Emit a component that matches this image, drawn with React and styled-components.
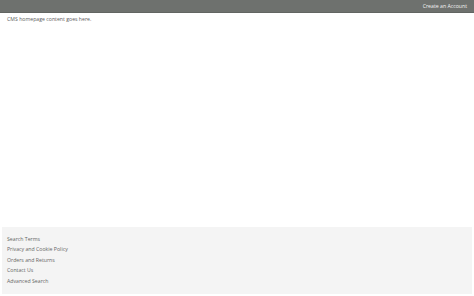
import React from 'react';
import styled, { createGlobalStyle } from 'styled-components';

const GlobalStyle = createGlobalStyle`
  html, body {
    margin: 0;
    padding: 0;
    background: #ffffff;
  }
  body {
    font-family: "Open Sans", "Liberation Sans", sans-serif;
    color: #555555;
  }
`;

const Page = styled.div`
  display: flex;
  flex-direction: column;
  width: 474px;
  height: 296px;
  overflow: hidden;
`;

const TopBar = styled.header`
  display: flex;
  justify-content: flex-end;
  align-items: center;
  height: 13px;
  box-sizing: border-box;
  background: #6e716e;
  border-bottom: 1px solid #626562;
  padding: 0 7px 0 0;
`;

const HeaderLink = styled.a`
  color: #f4f4f4;
  font-size: 5.2px;
  text-decoration: none;
`;

const Main = styled.main`
  flex: 1;
  padding: 2px 7px 0;
  font-size: 5.2px;
  color: #5a5a5a;
`;

const Footer = styled.footer`
  margin: 0 2px 2px;
  height: 67px;
  background: #f4f4f4;
  padding: 7px 5px 0;
  box-sizing: border-box;
`;

const LinkList = styled.ul`
  list-style: none;
  margin: 0;
  padding: 0;
  display: flex;
  flex-direction: column;
`;

const FooterLink = styled.li`
  font-size: 5.2px;
  line-height: 10.4px;
  color: #666666;
`;

const links = [
  'Search Terms',
  'Privacy and Cookie Policy',
  'Orders and Returns',
  'Contact Us',
  'Advanced Search',
];

export default function App() {
  return (
    <>
      <GlobalStyle />
      <Page>
        <TopBar>
          <HeaderLink href="#">Create an Account</HeaderLink>
        </TopBar>
        <Main>CMS homepage content goes here.</Main>
        <Footer>
          <LinkList>
            {links.map((l) => (
              <FooterLink key={l}>{l}</FooterLink>
            ))}
          </LinkList>
        </Footer>
      </Page>
    </>
  );
}
